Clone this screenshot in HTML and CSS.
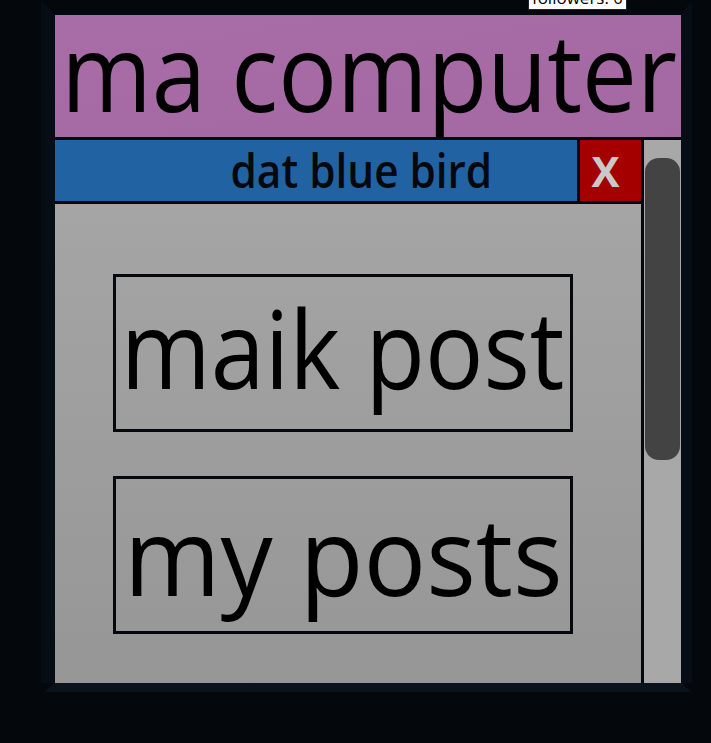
FILE: index.html
```html
<!DOCTYPE html>
<html>
<head>
<meta charset="utf-8">
<link rel="stylesheet" href="styles.css">
</head>
<body>
<div class="device">
  <div class="side side-left"></div>
  <div class="screen">
    <div class="title"><span class="squeeze">ma computer</span></div>
    <div class="body">
      <div class="main">
        <div class="tabbar">
          <div class="tab-name"><span class="squeeze">dat blue bird</span></div>
          <div class="tab-close">X</div>
        </div>
        <div class="content">
          <div class="btn"><span class="squeeze">maik post</span></div>
          <div class="btn btn-low"><span class="squeeze">my posts</span></div>
        </div>
      </div>
      <div class="track"><div class="thumb"></div></div>
    </div>
  </div>
  <div class="side side-right"></div>
  <div class="base"></div>
</div>
<div class="followers"><span>followers: 0</span></div>
</body>
</html>
```
FILE: styles.css
```css
html, body {
  margin: 0;
  padding: 0;
}
body {
  width: 711px;
  height: 743px;
  overflow: hidden;
  background: #04080d;
  font-family: "Open Sans", "Noto Sans", sans-serif;
  position: relative;
}
.device {
  margin-left: 41px;
  display: grid;
  grid-template-columns: 14px 626px 11px;
  grid-template-rows: 15px 668px 9px;
}
.side {
  background: #070d15;
  grid-row: 1 / 3;
}
.side-left {
  grid-column: 1;
  clip-path: polygon(0 0, 100% 15px, 100% 100%, 0 100%);
}
.side-right {
  grid-column: 3;
  clip-path: polygon(0 15px, 100% 0, 100% 100%, 0 100%);
}
.base {
  grid-row: 3;
  grid-column: 1 / 4;
  background: #0a131c;
  clip-path: polygon(14px 0, 640px 0, 651px 100%, 3px 100%);
}
.screen {
  grid-row: 2;
  grid-column: 2;
  display: flex;
  flex-direction: column;
  background: #04080d;
  gap: 3px;
}
.squeeze {
  display: inline-block;
  white-space: nowrap;
}
.title {
  height: 122px;
  background: linear-gradient(170deg, #a86ca7, #a468a3);
  color: #000;
  font-size: 108px;
  line-height: 112px;
  text-align: center;
  overflow: hidden;
  white-space: nowrap;
}
.title .squeeze {
  transform: scaleX(0.905);
  margin-left: -70px;
  margin-right: -70px;
  padding-left: 3px;
}
.body {
  flex: 1;
  display: flex;
  gap: 3px;
}
.main {
  width: 586px;
  display: flex;
  flex-direction: column;
  gap: 3px;
}
.tabbar {
  height: 61px;
  display: flex;
  gap: 3px;
}
.tab-name {
  width: 522px;
  background: #2163a2;
  color: #05080c;
  font-size: 47px;
  font-weight: 600;
  line-height: 60px;
  text-align: center;
  padding-left: 90px;
  box-sizing: border-box;
  overflow: hidden;
}
.tab-name .squeeze {
  transform: scaleX(0.9);
  margin: 0 -30px;
}
.tab-close {
  width: 61px;
  background: #a40000;
  color: #c9c9c9;
  font-weight: 700;
  font-size: 42px;
  line-height: 61px;
  text-align: center;
  padding-right: 10px;
  box-sizing: border-box;
}
.content {
  flex: 1;
  background: linear-gradient(180deg, #a5a5a5, #969696);
  padding: 70px 0 0 58px;
  display: flex;
  flex-direction: column;
  gap: 44px;
}
.btn {
  width: 460px;
  height: 158px;
  box-sizing: border-box;
  border: 3px solid #05090e;
  font-size: 108px;
  line-height: 142px;
  text-align: center;
  color: #000;
  overflow: hidden;
}
.btn .squeeze {
  transform: scaleX(0.9);
  margin: 0 -40px;
}
.btn-low {
  line-height: 152px;
}
.btn-low .squeeze {
  transform: scaleX(0.965);
}
.track {
  width: 37px;
  background: #a8a8a8;
  padding-top: 18px;
}
.thumb {
  margin-left: 1px;
  width: 35px;
  height: 302px;
  border-radius: 14px;
  background: #434343;
}
.followers {
  position: absolute;
  top: 0;
  left: 528px;
  width: 99px;
  height: 10px;
  box-sizing: border-box;
  background: #fff;
  border: 1px solid #1b2630;
  border-top: none;
  overflow: hidden;
  color: #000;
  font-size: 17px;
  text-align: center;
}
.followers span {
  display: block;
  line-height: 17px;
  margin-top: -11px;
}
```
